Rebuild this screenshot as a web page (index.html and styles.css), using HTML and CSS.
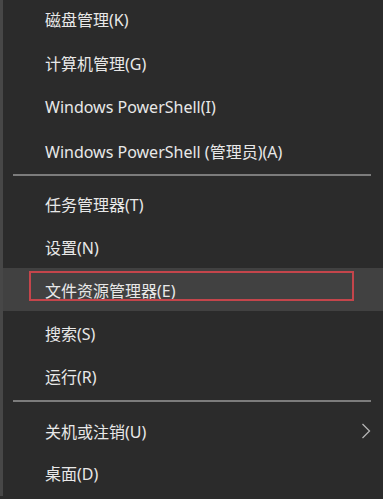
FILE: index.html
```
<!DOCTYPE html>
<html>
<head>
	<meta charset="UTF-8">
	<title>WinX</title>
	<link rel="stylesheet" href="styles.css">
</head>
<body>
	<div class="menu">
		<div class="group first">
			<div class="item tall">磁盘管理(K)</div>
			<div class="item tall">计算机管理(G)</div>
			<div class="item tall">Windows PowerShell(I)</div>
			<div class="item tall">Windows PowerShell (管理员)(A)</div>
		</div>
		<div class="separator sepOne"></div>
		<div class="group">
			<div class="item">任务管理器(T)</div>
			<div class="item">设置(N)</div>
			<div class="item hover">文件资源管理器(E)<span class="mark"></span></div>
			<div class="item">搜索(S)</div>
			<div class="item">运行(R)</div>
		</div>
		<div class="separator sepTwo"></div>
		<div class="group last">
			<div class="item">关机或注销(U)
				<svg class="chevron" width="10" height="16" viewBox="0 0 10 16">
					<polyline points="1.5,1 8.5,8 1.5,15" fill="none" stroke="#b4b4b4" stroke-width="1.3" />
				</svg>
			</div>
			<div class="item short">桌面(D)</div>
		</div>
	</div>
</body>
</html>
```

FILE: styles.css
```
body {
	padding: 0;
	margin: 0;
	background-color: #2b2b2b;
	overflow: hidden;
}
.menu {
	height: 100vh;
	border-left: 3px solid #474747;
	background-color: #2b2b2b;
	font-family: "Noto Sans", "Noto Sans CJK SC", sans-serif;
	font-size: 16px;
	color: #e8e8e8;
}
.group.first {
	margin-top: -3px;
}
.item {
	position: relative;
	display: flex;
	align-items: center;
	height: 43px;
	padding-left: 42px;
	box-sizing: border-box;
	white-space: nowrap;
}
.item.tall {
	height: 44px;
}
.item.short {
	height: 41px;
}
.item.hover {
	background-color: #414141;
}
.mark {
	position: absolute;
	left: 26px;
	top: 3px;
	width: 325px;
	height: 30px;
	box-sizing: border-box;
	border: 2px solid #c4454b;
}
.chevron {
	margin-left: auto;
	margin-right: 12px;
}
.separator {
	height: 2px;
	margin: 0 12px 0 10px;
	background-color: #7c7c7c;
}
.sepOne {
	margin-top: 1px;
	margin-bottom: 6px;
}
.sepTwo {
	margin-top: 3px;
	margin-bottom: 7px;
}
```
